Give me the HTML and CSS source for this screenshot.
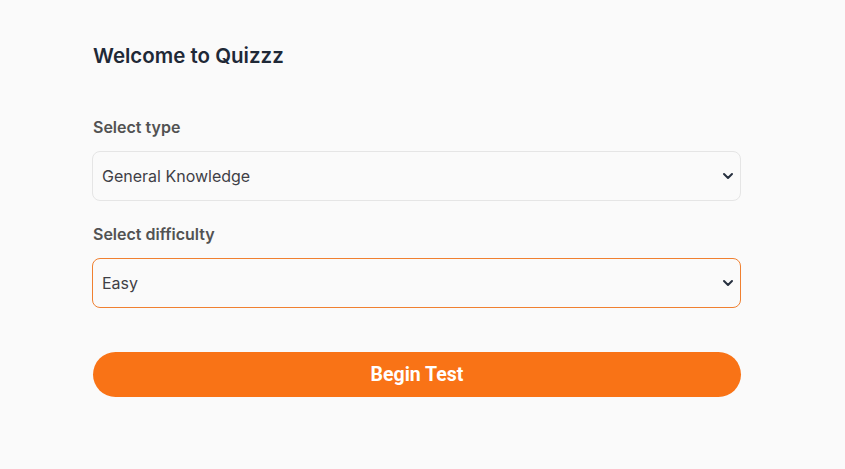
FILE: index.html
```html
<!DOCTYPE html>
<html lang="en">
<head>
<meta charset="utf-8">
<title>Quizzz</title>
<link rel="stylesheet" href="styles.css">
</head>
<body>
<main class="page">
  <h1 class="title">Welcome to Quizzz</h1>
  <div class="field field-type">
    <label class="label">Select type</label>
    <div class="select">
      <span class="value">General Knowledge</span>
      <svg class="chev" width="12" height="8" viewBox="0 0 12 8"><path d="M2 2 L6 6 L10 2" fill="none" stroke="#27303f" stroke-width="2" stroke-linecap="round" stroke-linejoin="round"/></svg>
    </div>
  </div>
  <div class="field">
    <label class="label">Select difficulty</label>
    <div class="select active">
      <span class="value">Easy</span>
      <svg class="chev" width="12" height="8" viewBox="0 0 12 8"><path d="M2 2 L6 6 L10 2" fill="none" stroke="#27303f" stroke-width="2" stroke-linecap="round" stroke-linejoin="round"/></svg>
    </div>
  </div>
  <button class="begin">Begin Test</button>
</main>
</body>
</html>
```
FILE: styles.css
```css
html, body {
  margin: 0;
  background: #fafafa;
  font-family: Inter, "Noto Sans", sans-serif;
}
.page {
  width: 649px;
  margin-left: 92px;
  padding-top: 42px;
  display: flex;
  flex-direction: column;
}
.title {
  margin: 0 0 0 1px;
  font-size: 20.5px;
  line-height: 28px;
  font-weight: 600;
  color: #1f2937;
}
.field {
  display: flex;
  flex-direction: column;
}
.field-type {
  margin-top: 45px;
}
.field + .field {
  margin-top: 21px;
}
.label {
  margin-left: 1px;
  font-size: 16px;
  line-height: 24px;
  font-weight: 600;
  color: #525252;
}
.select {
  margin-top: 12px;
  height: 48px;
  border: 1px solid #e5e5e5;
  border-radius: 8px;
  display: flex;
  align-items: center;
  justify-content: space-between;
  padding: 0 6px 0 9px;
  background: #fafafa;
}
.select.active {
  border-color: #f08030;
}
.value {
  font-size: 16px;
  color: #3f3f46;
}
.chev {
  display: block;
}
.begin {
  margin-top: 44px;
  margin-left: 1px;
  height: 45px;
  border: none;
  border-radius: 23px;
  background: #f97316;
  color: #fff;
  font-family: Roboto, sans-serif;
  font-weight: 700;
  font-size: 19.5px;
}
```
